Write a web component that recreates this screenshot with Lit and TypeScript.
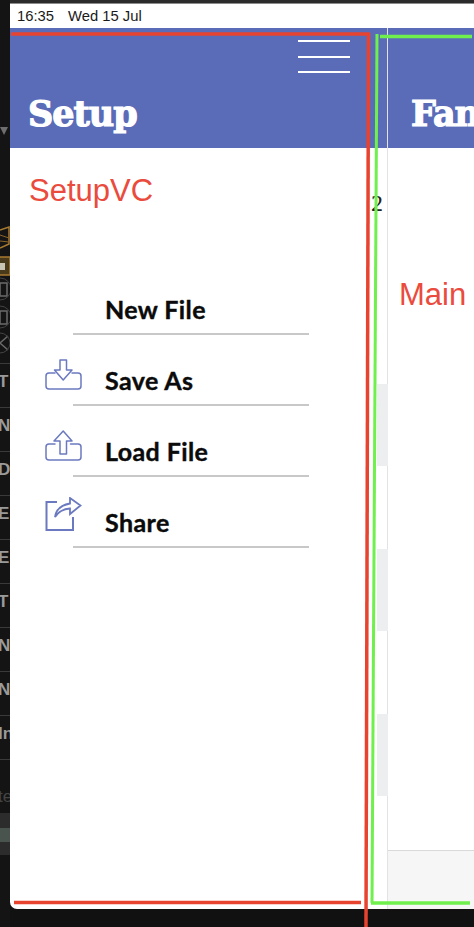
import { LitElement, html, css, svg } from "lit";
import { customElement } from "lit/decorators.js";

const ICON = "#6b79c0";

const saveIcon = svg`<svg class="ic" viewBox="0 0 37 32" width="37" height="32" fill="none" stroke="${ICON}" stroke-width="1.5" stroke-linejoin="round" stroke-linecap="round">
  <path d="M10 14H4Q1 14 1 17V27Q1 30 4 30H33Q36 30 36 27V17Q36 14 33 14H27"/>
  <path d="M15 1H21.500V11H27L18.200 21L9.500 11H15Z"/></svg>`;
const loadIcon = svg`<svg class="ic" viewBox="0 0 37 32" width="37" height="32" fill="none" stroke="${ICON}" stroke-width="1.5" stroke-linejoin="round" stroke-linecap="round">
  <path d="M10 14H4Q1 14 1 17V27Q1 30 4 30H33Q36 30 36 27V17Q36 14 33 14H25.500"/>
  <path d="M15 24V11H9L18.200 1L27 11H21.500V24Z"/></svg>`;
const shareIcon = svg`<svg class="ic" viewBox="0 0 37 36" width="37" height="36" fill="none" stroke="${ICON}" stroke-linejoin="miter">
  <path d="M12 5H1.500V33H28V20" stroke-width="2"/>
  <path d="M10 20C11 12 17 8 25 6.500V1L35.500 8.500L25 17V11.500C18 12 13 15 10 20Z" stroke-width="1.800"/></svg>`;

interface Row { label: string; icon: unknown }
const rows: Row[] = [
  { label: "New File", icon: null },
  { label: "Save As", icon: saveIcon },
  { label: "Load File", icon: loadIcon },
  { label: "Share", icon: shareIcon },
];

@customElement("side-rail")
class SideRail extends LitElement {
  static styles = css`
    :host { display: block; width: 10px; flex: none; height: 927px; background: #141415; overflow: hidden; position: relative; }
    .arrow { position: absolute; left: 0; top: 127px; width: 0; height: 0; border-left: 4.500px solid transparent; border-right: 4.500px solid transparent; border-top: 8px solid #6e6e6e; }
    .row { position: absolute; left: 0; width: 10px; height: 44px; border-top: 1px solid #3a3a3a; box-sizing: border-box; font: bold 17px "Liberation Sans", sans-serif; color: #9a9a9a; overflow: hidden; display: flex; align-items: center; padding-bottom: 7px; }
    .row span { display: block; margin-left: -2px; white-space: nowrap; }
    .row.dim { color: #444; border-top: none; font-weight: normal; }
    .panel { position: absolute; left: 0; top: 813px; width: 10px; height: 42px; background: #2c2c2c; }
    .panel div { margin-top: 15px; height: 14px; background: #4a544f; }
    .art { display: block; position: absolute; left: 0; top: 226px; }
  `;
  render() {
    const items: [string, number][] = [["T", 363], ["N", 407], ["D", 451], ["E", 495], ["E", 539], ["T", 583], ["N", 627], ["N", 671], ["In", 715]];
    return html`
      <div class="arrow"></div>
      <svg class="art" width="10" height="140" fill="none">
        <path d="M0 4L9 1V18L0 22" stroke="#a87a30" stroke-width="1.500"/>
        <path d="M0 9L9 12M0 15L9 16" stroke="#8a6428" stroke-width="1"/>
        <rect x="-2" y="31" width="12" height="18" fill="#4a3a1c" stroke="#a87a30" stroke-width="1.500"/>
        <rect x="0" y="37" width="5" height="7" fill="#c9c4b4"/>
        <rect x="0" y="57" width="7" height="13" stroke="#6a6a6a" stroke-width="1.500"/>
        <circle cx="0" cy="63" r="11" stroke="#444"/>
        <rect x="0" y="85" width="7" height="13" stroke="#6a6a6a" stroke-width="1.500"/>
        <circle cx="0" cy="91" r="11" stroke="#444"/>
        <path d="M0 117L8 110M0 117L8 124" stroke="#6a6a6a" stroke-width="1.500"/>
        <circle cx="0" cy="117" r="10" stroke="#444"/>
      </svg>
      ${items.map(([t, top]) => html`<div class="row" style="top:${top}px"><span>${t}</span></div>`)}
      <div class="row" style="top:759px"></div>
      <div class="row dim" style="top:778px"><span>te</span></div>
      <div class="panel"><div></div></div>
    `;
  }
}

@customElement("app-root")
export class AppRoot extends LitElement {
  static styles = css`
    :host { display: block; width: 474px; height: 927px; background: #111112; overflow: hidden; position: relative; font-family: "Liberation Sans", sans-serif; }
    .top { height: 4px; background: #2b2b2c; border-bottom: 1px solid #8b8b8b; box-sizing: border-box; position: absolute; left: 10px; right: 0; top: 0; }
    .shell { display: flex; height: 927px; }
    .device { flex: 1; min-width: 0; margin-top: 4px; height: 905px; background: #fff; border-bottom-left-radius: 7px; overflow: hidden; display: flex; flex-direction: column; }
    .status { height: 24px; flex: none; font-size: 14.800px; color: #1a1a1a; display: flex; align-items: center; padding-left: 7px; gap: 14px; }
    .panes { flex: 1; display: flex; min-height: 0; }
    .setup { width: 377px; flex: none; border-right: 1px solid #e3e3e6; display: flex; flex-direction: column; position: relative; }
    .main { flex: 1; display: flex; flex-direction: column; min-width: 0; }
    .nav { height: 120px; flex: none; background: #5a6cb8; position: relative; display: flex; align-items: flex-end; box-sizing: border-box; padding: 0 0 14px 18px; }
    h1 { margin: 0; font: 900 35px/40px "DejaVu Serif", serif; letter-spacing: -1px; color: #fff; -webkit-text-stroke: 1.200px #fff; white-space: nowrap; }
    .burger { position: absolute; right: 37px; top: 12px; width: 52px; display: flex; flex-direction: column; gap: 13.500px; }
    .burger i { display: block; height: 2px; background: #fff; }
    .title { color: #ea4b3c; font-size: 31px; line-height: 34px; margin: 26px 0 0 19px; }
    .list { margin-top: 56px; padding-left: 63px; width: 236px; }
    .row { height: 71px; box-sizing: border-box; border-bottom: 2px solid #c8c8c8; display: flex; align-items: flex-end; position: relative; padding: 0 0 6px 32px; }
    .row span { font: 700 25px/36px "Lato", sans-serif; letter-spacing: 0.400px; color: #0b0b0b; -webkit-text-stroke: 0.400px #0b0b0b; }
    .holder { position: absolute; left: -28px; bottom: 13px; }
    .ic { display: block; }
    .two { position: absolute; left: 361px; top: 163px; font: 24px/24px "Liberation Serif", serif; color: #222; }
    .main-nav { height: 120px; flex: none; background: #5a6cb8; display: flex; align-items: flex-end; padding: 0 0 14px 23px; box-sizing: border-box; overflow: hidden; }
    .main-body { flex: 1; display: flex; flex-direction: column; }
    .main-title { color: #ea4b3c; font-size: 31px; line-height: 34px; margin: 130px 0 0 11px; white-space: nowrap; }
    .spacer { flex: 1; }
    .footer { height: 59px; flex: none; background: #f6f6f7; border-top: 1px solid #d9d9d9; box-sizing: border-box; }
    .stripe { position: absolute; left: 367px; width: 11px; background: #eceef0; }
    .marks { position: absolute; left: 0; top: 0; pointer-events: none; }
  `;
  render() {
    return html`
      <div class="shell">
        <side-rail></side-rail>
        <div class="device">
          <div class="status"><span>16:35</span><span>Wed 15 Jul</span></div>
          <div class="panes">
            <div class="setup">
              <div class="nav">
                <h1>Setup</h1>
                <div class="burger"><i></i><i></i><i></i></div>
              </div>
              <div class="title">SetupVC</div>
              <div class="list">
                ${rows.map(r => html`<div class="row">${r.icon ? html`<div class="holder">${r.icon}</div>` : ""}<span>${r.label}</span></div>`)}
              </div>
              <div class="stripe" style="top:356px;height:82px"></div>
              <div class="stripe" style="top:521px;height:82px"></div>
              <div class="stripe" style="top:686px;height:82px"></div>
              <div class="two">2</div>
            </div>
            <div class="main">
              <div class="main-nav"><h1>Fan</h1></div>
              <div class="main-body">
                <div class="main-title">Main</div>
                <div class="spacer"></div>
                <div class="footer"></div>
              </div>
            </div>
          </div>
        </div>
      </div>
      <div class="top"></div>
      <svg class="marks" width="474" height="927" fill="none">
        <path d="M11 34H370" stroke="#e8432f" stroke-width="3.500"/>
        <path d="M368.500 33L366 927" stroke="#e8432f" stroke-width="3.500"/>
        <path d="M14 902.500H361" stroke="#e8432f" stroke-width="3.500"/>
        <path d="M377 34L372 903" stroke="#6ff04c" stroke-width="3"/>
        <path d="M380 36.500H472" stroke="#6ff04c" stroke-width="3.500"/>
        <path d="M371 903H470" stroke="#6ff04c" stroke-width="3.500"/>
      </svg>
    `;
  }
}
void SideRail;
